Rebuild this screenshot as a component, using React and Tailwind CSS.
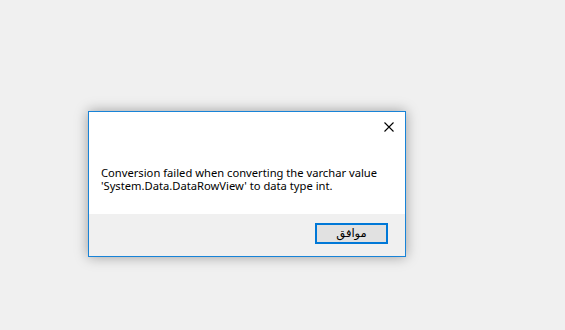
export default function App() {
  return (
    <div className="w-[565px] h-[330px] bg-[#f0f0f0] pl-[88px] pt-[111px] font-['Noto_Sans',sans-serif]">
      <div className="w-[318px] h-[146px] border border-[#1883d7] bg-white flex flex-col shadow-[0_0_12px_rgba(0,0,0,0.35)]">
        <div className="h-[102px]">
          <div className="flex justify-end pt-[10px] pr-[11px]">
            <svg width="10" height="10" viewBox="0 0 10 10" className="block">
              <path d="M0.5 0.5 L9.5 9.5 M9.5 0.5 L0.5 9.5" stroke="#000" strokeWidth="1.1" fill="none" />
            </svg>
          </div>
          <p className="pl-[12px] pt-[34px] text-[11.2px] leading-[13px] text-black">
            Conversion failed when converting the varchar value
            <br />
            'System.Data.DataRowView' to data type int.
          </p>
        </div>
        <div className="flex-1 bg-[#f0f0f0] flex justify-end items-start pt-[9px] pr-[17px]">
          <button
            type="button"
            className="w-[73px] h-[21px] border-2 border-[#0078d7] bg-[#e1e1e1] text-[11.5px] leading-none text-black font-['DejaVu_Sans',sans-serif]"
          >
            موافق
          </button>
        </div>
      </div>
    </div>
  );
}
